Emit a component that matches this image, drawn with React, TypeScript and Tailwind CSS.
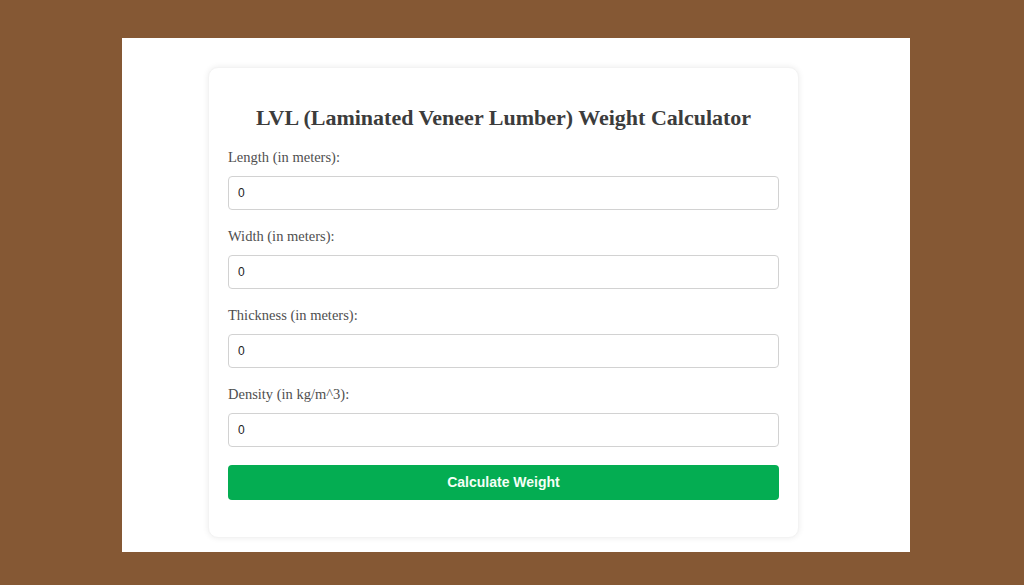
import React from "react";

const fields = [
  "Length (in meters):",
  "Width (in meters):",
  "Thickness (in meters):",
  "Density (in kg/m^3):",
];

export default function App() {
  return (
    <div className="w-[1024px] h-[585px] bg-[#855834] pt-[38px] pl-[122px]">
      <div className="w-[788px] h-[514px] bg-white pt-[29px] pl-[86px]">
        <div className="w-[591px] h-[471px] bg-white rounded-[10px] shadow-[0_0_6px_rgba(0,0,0,0.08)] border border-[#f3f3f3] px-[19px] pt-[36px]">
          <h1 className="text-center text-[22px] leading-[27px] font-bold text-[#3c3c3c] mb-[18px]" style={{ fontFamily: '"Liberation Serif", serif' }}>
            LVL (Laminated Veneer Lumber) Weight Calculator
          </h1>
          {fields.map((f) => (
            <div key={f} className="mb-[18px]">
              <label className="block text-[14.5px] leading-[17px] text-[#4f4f4f] mb-[10px]" style={{ fontFamily: '"Liberation Serif", serif' }}>
                {f}
              </label>
              <input
                defaultValue="0"
                className="block w-full h-[34px] border border-[#d2d2d2] rounded-[4px] px-[9px] text-[12px] font-medium text-[#222] outline-none"
                style={{ fontFamily: '"Liberation Sans", Arial, sans-serif' }}
              />
            </div>
          ))}
          <button
            className="block w-full h-[35px] mt-[2px] rounded-[4px] bg-[#04ad52] text-[#f4fff6] text-[14px] font-bold"
            style={{ fontFamily: '"Liberation Sans", Arial, sans-serif' }}
          >
            Calculate Weight
          </button>
        </div>
      </div>
    </div>
  );
}
